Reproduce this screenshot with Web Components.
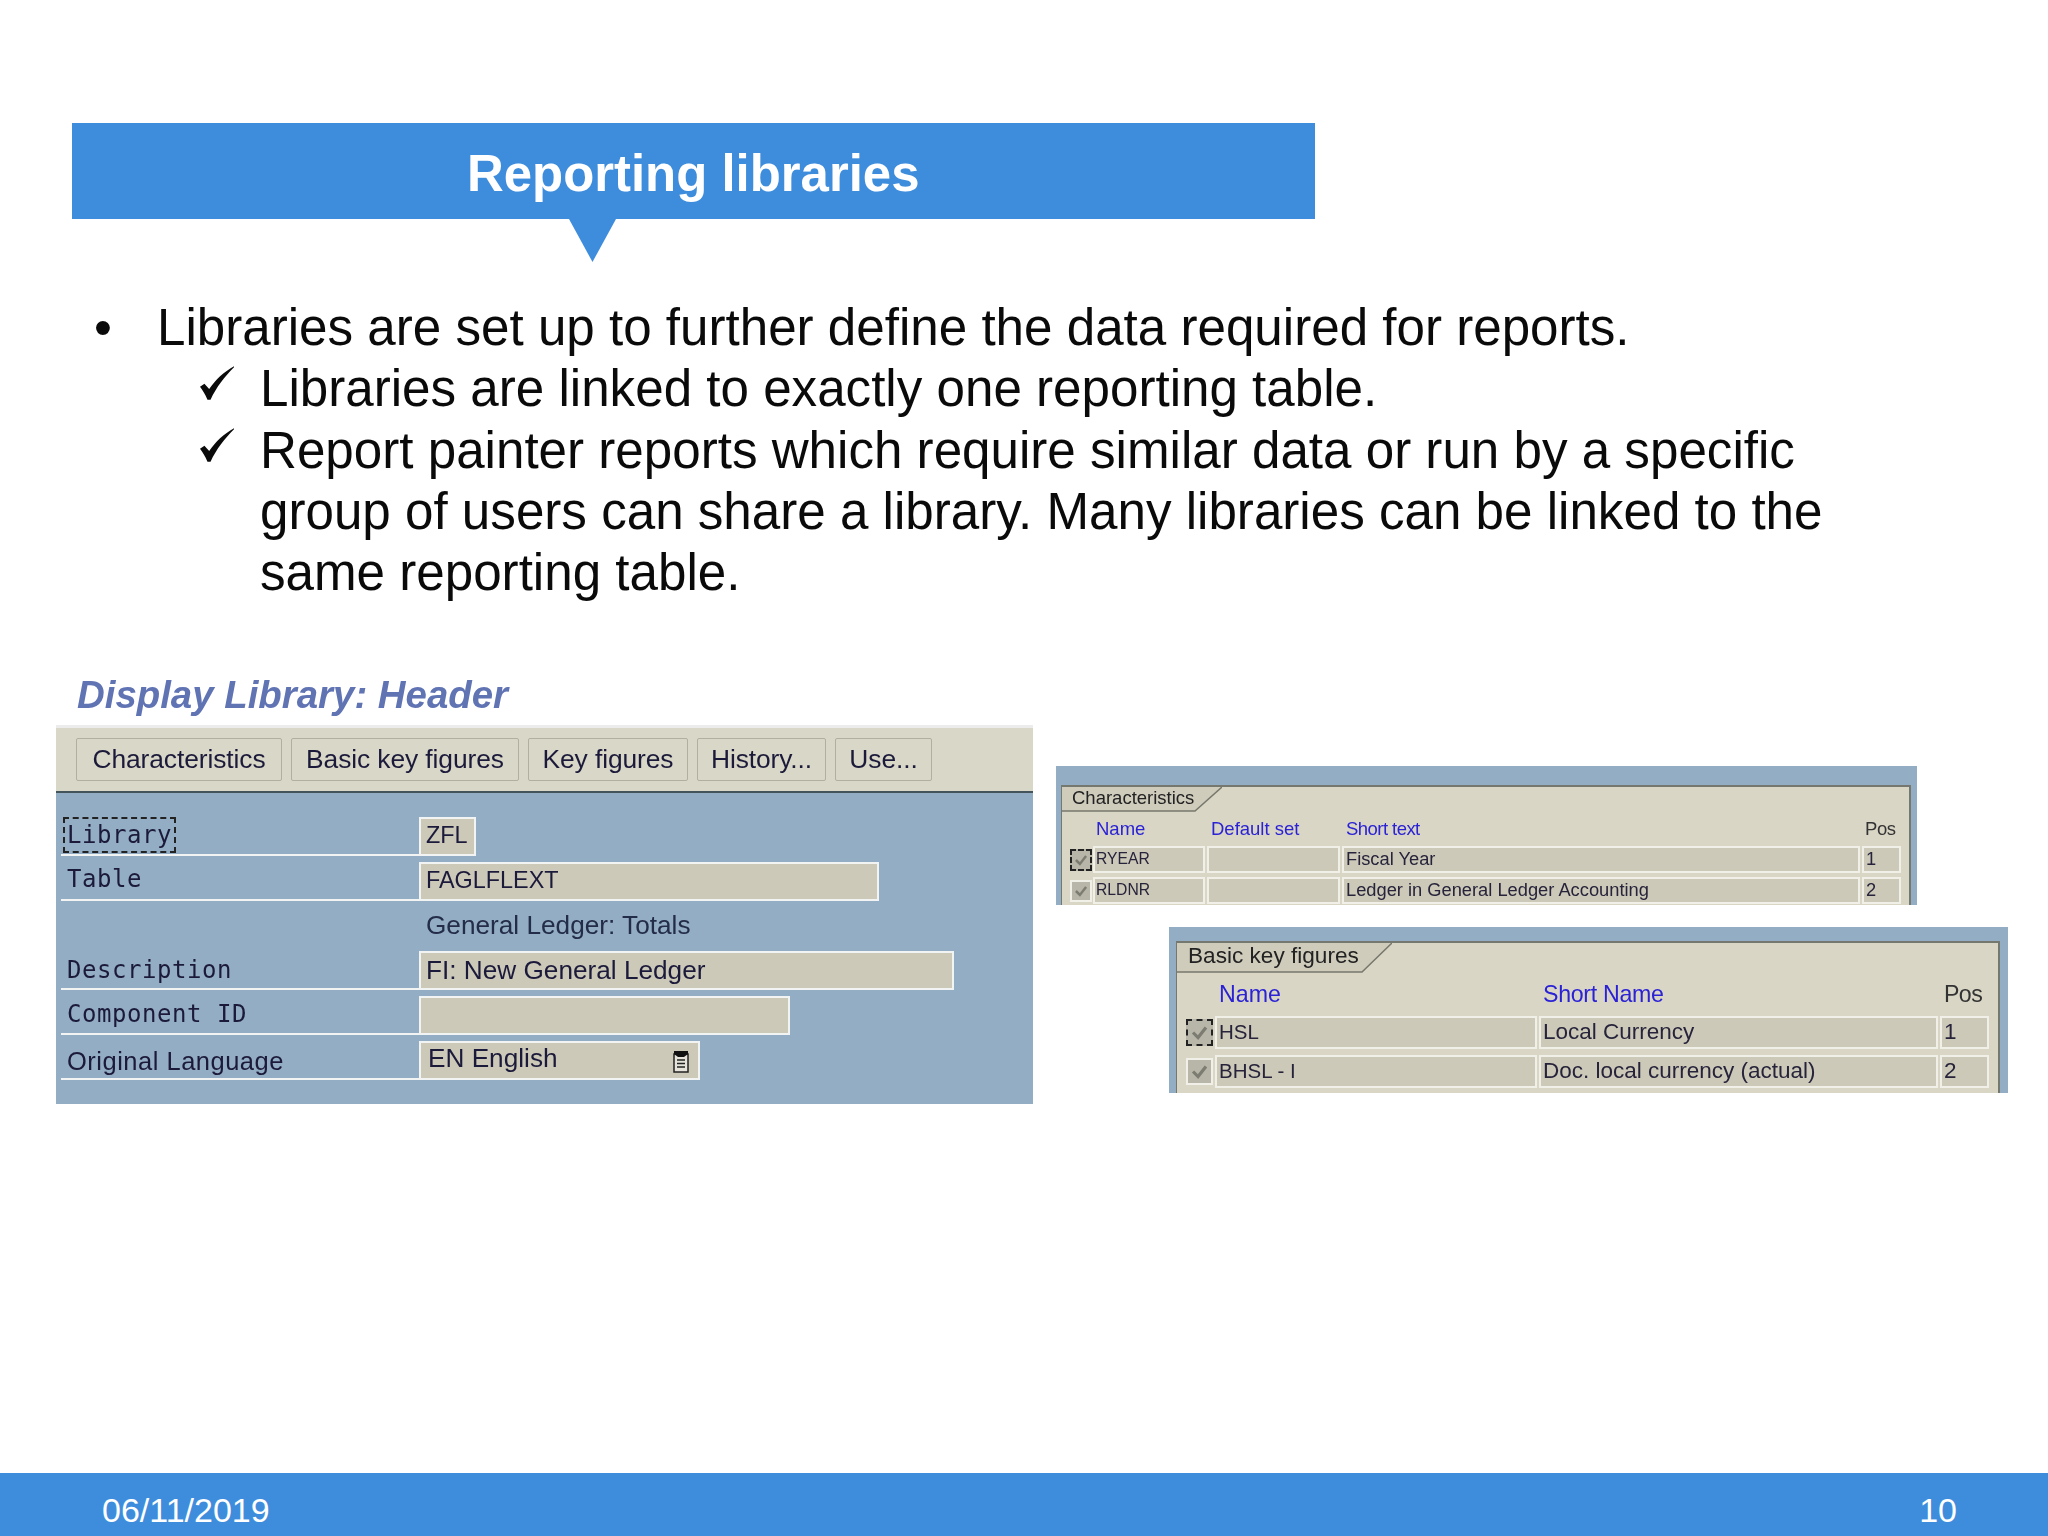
<!DOCTYPE html>
<html>
<head>
<meta charset="utf-8">
<title>Reporting libraries</title>
<style>
  html, body { margin: 0; background: #fff; }
  body { font-family: "Liberation Sans", Arial, sans-serif; }
</style>
</head>
<body>
<slide-page>
  <slide-title slot="title">Reporting libraries</slide-title>
  <slide-bullets slot="body">
    <slide-bullet kind="dot">Libraries are set up to further define the data required for reports.</slide-bullet>
    <slide-bullet kind="check">Libraries are linked to exactly one reporting table.</slide-bullet>
    <slide-bullet kind="check">Report painter reports which require similar data or run by a specific group of users can share a library. Many libraries can be linked to the same reporting table.</slide-bullet>
  </slide-bullets>
  <library-form slot="left"></library-form>
  <field-table slot="right" id="chars"></field-table>
  <field-table slot="right" id="figures"></field-table>
  <slide-footer slot="footer" date="06/11/2019" page="10"></slide-footer>
</slide-page>

<script>
const pageTemplate = document.createElement('template')
pageTemplate.innerHTML = `
  <style>
    :host { display: flex; flex-direction: column; width: 2048px; height: 1536px; overflow: hidden; background: #fff; }
    .title { margin: 123px 0 0 72px; }
    .body { margin: 0 0 0 94px; height: 450px; padding-top: 78px; box-sizing: border-box; }
    .shots { display: flex; align-items: flex-start; margin-left: 56px; }
    .right { display: flex; flex-direction: column; gap: 22px; margin: 97px 0 0 23px; }
    .foot { margin-top: auto; }
  </style>
  <div class="title"><slot name="title"></slot></div>
  <div class="body"><slot name="body"></slot></div>
  <div class="shots">
    <slot name="left"></slot>
    <div class="right"><slot name="right"></slot></div>
  </div>
  <div class="foot"><slot name="footer"></slot></div>
`
class SlidePage extends HTMLElement {
  constructor() {
    super()
    this.attachShadow({ mode: 'open' })
    this.shadowRoot.appendChild(pageTemplate.content.cloneNode(true))
  }
}
customElements.define('slide-page', SlidePage)

class SlideTitle extends HTMLElement {
  constructor() {
    super()
    this.attachShadow({ mode: 'open' })
    this.shadowRoot.innerHTML = `
      <style>
        :host { display: block; position: relative; width: 1243px; height: 96px; background: #3e8ddd; }
        .text { padding: 21px 0 0 395px; color: #fff; font: bold 50.9px/60px "Liberation Sans", Arial, sans-serif; }
        .tail { position: absolute; left: 497px; top: 96px; width: 47px; height: 43px; background: #3e8ddd; clip-path: polygon(0 0, 100% 0, 50% 100%); }
      </style>
      <div class="text"><slot></slot></div>
      <div class="tail"></div>
    `
  }
}
customElements.define('slide-title', SlideTitle)

class SlideBullets extends HTMLElement {
  constructor() {
    super()
    this.attachShadow({ mode: 'open' })
    this.shadowRoot.innerHTML = `
      <style>
        :host { display: block; width: 1740px; color: #0a0a0a; font: 51.15px/61.3px "Liberation Sans", Arial, sans-serif; }
      </style>
      <slot></slot>
    `
  }
}
customElements.define('slide-bullets', SlideBullets)

class SlideBullet extends HTMLElement {
  constructor() {
    super()
    const check = this.getAttribute('kind') === 'check'
    this.attachShadow({ mode: 'open' })
    this.shadowRoot.innerHTML = `
      <style>
        :host { display: flex; }
        :host([kind=dot]) .mark { width: 63px; }
        :host([kind=check]) { padding-left: 104px; }
        :host([kind=check]) .mark { width: 62px; }
        svg { display: block; margin: 8px 0 0 2px; }
        .text { flex: 1; }
      </style>
      <div class="mark">${check
        ? '<svg width="34" height="34" viewBox="0 0 100 98"><path d="M0 60 L13 51 L27 67 C45 40 70 17 100 0 L100 3 C73 30 48 62 31 98 L22 98 C15 82 8 70 0 60 Z" fill="#0a0a0a"/></svg>'
        : '•'}</div>
      <div class="text"><slot></slot></div>
    `
  }
}
customElements.define('slide-bullet', SlideBullet)

const formTemplate = document.createElement('template')
formTemplate.innerHTML = `
  <style>
    :host { display: block; width: 977px; font-family: "Liberation Sans", Arial, sans-serif; color: #1c1a3a; filter: blur(.45px); }
    h1 { margin: 0 0 0 21px; height: 56px; font: italic bold 38.4px/51px "Liberation Sans", Arial, sans-serif; color: #6073b3; }
    .bar { display: flex; gap: 9px; height: 68px; box-sizing: border-box; padding: 10px 0 0 20px; background: #d9d7c7; border-top: 3px solid #ececec; border-bottom: 2px solid #44545c; }
    .btn { height: 43px; box-sizing: border-box; line-height: 40px; border: 1px solid #b1af9f; border-radius: 2px; text-align: center; font-size: 26.4px; letter-spacing: -.1px; }
    .main { height: 311px; box-sizing: border-box; padding: 23px 0 0 5px; background: #93aec4; display: grid; grid-template-columns: 358px 1fr; grid-template-rows: 40px 45px 50px 39px 45px 45px; }
    .lab { display: flex; align-items: center; padding-left: 6px; border-bottom: 2px solid #f2f4f4; font: 24px "DejaVu Sans Mono", monospace; letter-spacing: .55px; box-sizing: border-box; }
    .lab span.focus { outline: 2px dashed #222; outline-offset: 2px; }
    .lab.plain { font: 25.5px "Liberation Sans", Arial, sans-serif; letter-spacing: .5px; }
    .lab.none { border: 0; }
    .cell { align-self: end; }
    .fld { height: 39px; box-sizing: border-box; background: #ccc9b9; border: 2px solid #f2f4f4; padding-left: 5px; font-size: 26.2px; line-height: 35px; position: relative; }
    .fld.caps { font-size: 23.4px; line-height: 33px; }
    .txt { padding-left: 7px; font-size: 26.2px; line-height: 49px; color: #232c48; }
    .pick { position: absolute; right: 8px; top: 8px; }
  </style>
  <h1>Display Library: Header</h1>
  <div class="bar">
    <div class="btn" style="width:206px">Characteristics</div>
    <div class="btn" style="width:228px">Basic key figures</div>
    <div class="btn" style="width:160px">Key figures</div>
    <div class="btn" style="width:129px">History...</div>
    <div class="btn" style="width:97px">Use...</div>
  </div>
  <div class="main">
    <div class="lab"><span class="focus">Library</span></div>
    <div class="cell"><div class="fld caps" style="width:57px">ZFL</div></div>
    <div class="lab" style="padding-top:2px">Table</div>
    <div class="cell"><div class="fld caps" style="width:460px">FAGLFLEXT</div></div>
    <div class="lab none"></div>
    <div class="txt">General Ledger: Totals</div>
    <div class="lab">Description</div>
    <div class="cell"><div class="fld" style="width:535px">FI: New General Ledger</div></div>
    <div class="lab" style="padding-top:5px">Component ID</div>
    <div class="cell"><div class="fld" style="width:371px"></div></div>
    <div class="lab plain" style="padding-top:9px">Original Language</div>
    <div class="cell"><div class="fld" style="width:281px;padding-left:7px;line-height:31px">EN English
      <svg class="pick" width="18" height="22" viewBox="0 0 18 22"><rect x="2" y="3" width="14" height="18" fill="#e6e4da" stroke="#222" stroke-width="1.5"/><path d="M2 0H16V3L12 6H6L2 3Z" fill="#111"/><path d="M5 9H13M5 12.5H13M5 16H13" stroke="#222" stroke-width="1.5"/></svg>
    </div></div>
  </div>
`
class LibraryForm extends HTMLElement {
  constructor() {
    super()
    this.attachShadow({ mode: 'open' })
    this.shadowRoot.appendChild(formTemplate.content.cloneNode(true))
  }
}
customElements.define('library-form', LibraryForm)

class FieldTable extends HTMLElement {
  constructor() {
    super()
    this.attachShadow({ mode: 'open' })
  }

  // c: column setup, rows are filled in from the page script below
  render(c) {
    const checkbox = focus => `
      <div class="chk ${focus ? 'focus' : ''}">
        <svg viewBox="0 0 16 16"><path d="M3.5 8 L7 11.5 L12.5 4.5" fill="none" stroke="#7d7c72" stroke-width="2.2"/></svg>
      </div>`
    const heads = c.heads.map(h => `<div class="head ${h.dark ? 'dark' : ''}" style="left:${h.x}px;letter-spacing:${h.ls || 0}px">${h.text}</div>`).join('')
    const rows = c.rows.map((r, i) => `
      <div class="row">
        ${checkbox(i === 0)}
        ${r.map((t, n) => `<div class="fld ${n === 0 ? 'key' : ''}">${t}</div>`).join('')}
      </div>`).join('')
    this.shadowRoot.innerHTML = `
      <style>
        :host { display: block; width: ${c.width}px; height: ${c.height}px; margin-left: ${c.left}px; overflow: hidden; background: #93aec4; box-sizing: border-box; padding: ${c.padTop}px ${c.padRight}px 0 ${c.padLeft}px; font-family: "Liberation Sans", Arial, sans-serif; filter: blur(.4px); }
        .box { height: 100%; background: #d9d6c5; border-top: 2px solid #75786f; border-left: 1px solid #75786f; border-right: 2px solid #75786f; box-sizing: border-box; }
        .tab { position: relative; width: ${c.tabW}px; height: ${c.tabH}px; color: #222; font-size: ${c.tabFont}px; line-height: ${c.tabH - 4}px; padding-left: ${c.tabPad}px; box-sizing: border-box; }
        .tab span { position: relative; }
        .tab svg { position: absolute; left: 0; top: 0; }
        .heads { position: relative; height: ${c.headH}px; font-size: ${c.font}px; line-height: ${c.headH}px; }
        .head { position: absolute; top: 0; color: #2b22d6; white-space: nowrap; }
        .head.dark { color: #333; }
        .row { display: grid; grid-template-columns: ${c.cols}; gap: ${c.gap}px; height: ${c.rowH}px; margin: 0 0 ${c.rowGap}px ${c.rowLeft}px; }
        .fld { background: #ccc9b9; outline: 2px solid #f1f0e8; outline-offset: -2px; padding-left: ${c.fldPad}px; color: #26233a; font-size: ${c.fldFont}px; line-height: ${c.rowH - 2}px; white-space: nowrap; overflow: hidden; }
        .fld.key { font-size: ${c.keyFont}px; padding-left: ${c.keyPad}px; }
        .chk { width: ${c.chk}px; height: ${c.chk}px; margin-top: 3px; background: #b7b6a8; border: 2px solid #f1f0e8; box-sizing: border-box; }
        .chk.focus { border: 2px dashed #222; }
        .chk svg { display: block; width: 100%; height: 100%; }
      </style>
      <div class="box">
        <div class="tab">
          <svg width="${c.tabW}" height="${c.tabH}"><polygon points="0,0 ${c.tabW},0 ${c.tabCut},${c.tabH - 1} 0,${c.tabH - 1}" fill="#cfccbc"/><polyline points="0,${c.tabH - 1} ${c.tabCut},${c.tabH - 1} ${c.tabW},0" fill="none" stroke="#77786c" stroke-width="1.5"/></svg>
          <span>${c.title}</span>
        </div>
        <div class="heads">${heads}</div>
        ${rows}
      </div>
    `
  }
}
customElements.define('field-table', FieldTable)

class SlideFooter extends HTMLElement {
  constructor() {
    super()
    this.attachShadow({ mode: 'open' })
    this.shadowRoot.innerHTML = `
      <style>
        :host { display: flex; justify-content: space-between; align-items: center; height: 63px; box-sizing: border-box; padding: 12px 91px 0 102px; background: #3e8ddd; color: #fff; font: 34px "Liberation Sans", Arial, sans-serif; }
      </style>
      <span>${this.getAttribute('date')}</span><span>${this.getAttribute('page')}</span>
    `
  }
}
customElements.define('slide-footer', SlideFooter)

document.getElementById('chars').render({
  width: 861, height: 139, left: 0, padTop: 19, padRight: 6, padLeft: 5,
  title: 'Characteristics', font: 18.5, tabFont: 18.5, fldFont: 18.3, keyFont: 15.7,
  tabW: 160, tabH: 25, tabCut: 133, tabPad: 10,
  headH: 34, rowH: 27, rowGap: 4, gap: 2, rowLeft: 8, chk: 22, fldPad: 4, keyPad: 3,
  cols: '21px 112px 133px 518px 39px',
  heads: [
    { x: 34, text: 'Name' },
    { x: 149, text: 'Default set' },
    { x: 284, text: 'Short text', ls: -.55 },
    { x: 803, text: 'Pos', dark: true, ls: -.4 }
  ],
  rows: [
    ['RYEAR', '', 'Fiscal Year', '1'],
    ['RLDNR', '', 'Ledger in General Ledger Accounting', '2']
  ]
})

document.getElementById('figures').render({
  width: 839, height: 166, left: 113, padTop: 14, padRight: 8, padLeft: 7,
  title: 'Basic key figures', font: 23.2, tabFont: 22.6, fldFont: 22.5, keyFont: 20.5,
  tabW: 215, tabH: 30, tabCut: 185, tabPad: 11,
  headH: 43, rowH: 33, rowGap: 6, gap: 2, rowLeft: 9, chk: 27, fldPad: 4, keyPad: 4,
  cols: '27px 322px 399px 49px',
  heads: [
    { x: 42, text: 'Name' },
    { x: 366, text: 'Short Name', ls: -.3 },
    { x: 767, text: 'Pos', dark: true, ls: -.6 }
  ],
  rows: [
    ['HSL', 'Local Currency', '1'],
    ['BHSL - I', 'Doc. local currency (actual)', '2']
  ]
})
</script>
</body>
</html>
